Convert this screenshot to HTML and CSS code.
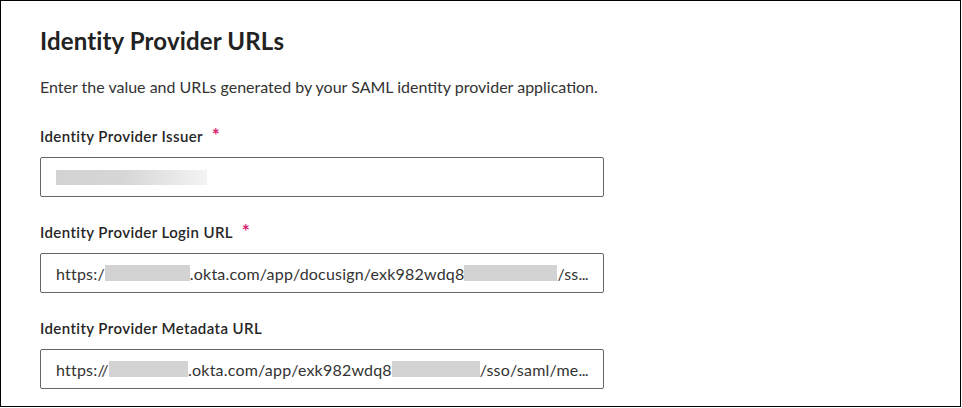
FILE: index.html
```html
<!DOCTYPE html>
<html lang="en">
<head>
<meta charset="utf-8">
<title>Identity Provider URLs</title>
<link rel="stylesheet" href="styles.css">
</head>
<body>
<div class="frame">
  <section class="panel">
    <h1 class="title">Identity Provider URLs</h1>
    <p class="desc">Enter the value and URLs generated by your SAML identity provider application.</p>

    <div class="field">
      <label class="label">Identity Provider Issuer <span class="req">*</span></label>
      <div class="input"><span class="redact fade"></span></div>
    </div>

    <div class="field">
      <label class="label">Identity Provider Login URL <span class="req">*</span></label>
      <div class="input">https:/<span class="redact r1"></span>.okta.com/app/docusign/exk982wdq8<span class="redact r2"></span>/ss<span class="dots">...</span></div>
    </div>

    <div class="field">
      <label class="label">Identity Provider Metadata URL</label>
      <div class="input">https://<span class="redact r1b"></span>.okta.com/app/exk982wdq8<span class="redact r2"></span>/sso/saml/me<span class="dots">...</span></div>
    </div>
  </section>
</div>
</body>
</html>
```

FILE: styles.css
```css
html, body {
  margin: 0;
  padding: 0;
  background: #fff;
}

.frame {
  box-sizing: border-box;
  width: 961px;
  height: 407px;
  border: 1px solid #000;
  overflow: hidden;
}

.panel {
  padding: 24px 0 0 39px;
  font-family: Lato, "Noto Sans", sans-serif;
  color: #2b2b2b;
}

.title {
  margin: 0;
  font-size: 24px;
  line-height: 32px;
  font-weight: 700;
  letter-spacing: 0.15px;
  color: #222;
}

.desc {
  margin: 18px 0 0;
  font-size: 16px;
  line-height: 24px;
  color: #333;
}

.field {
  margin-top: 25px;
  display: flex;
  flex-direction: column;
  gap: 11px;
}

.desc + .field {
  margin-top: 27px;
}

.label {
  font-size: 15px;
  line-height: 20px;
  font-weight: 600;
  letter-spacing: 0.4px;
  color: #262626;
}

.req {
  color: #d6246e;
  margin-left: 5px;
  font-size: 19px;
  line-height: 0;
  font-weight: 700;
}

.input {
  box-sizing: border-box;
  width: 564px;
  height: 40px;
  border: 1px solid #666;
  border-radius: 2px;
  padding: 0 15px;
  display: flex;
  align-items: center;
  font-size: 16px;
  letter-spacing: 0.2px;
  color: #333;
  white-space: nowrap;
  overflow: hidden;
}

.dots {
  letter-spacing: -0.6px;
}

.redact {
  display: inline-block;
  height: 16px;
  background: #d3d3d3;
}

.fade {
  width: 151px;
  height: 15px;
  background: linear-gradient(to right, #d3d3d3 0%, #d6d6d6 45%, #f4f4f4 100%);
}

.r1 { width: 86px; }
.r1b { width: 85px; }
.r2 { width: 94px; }
```
